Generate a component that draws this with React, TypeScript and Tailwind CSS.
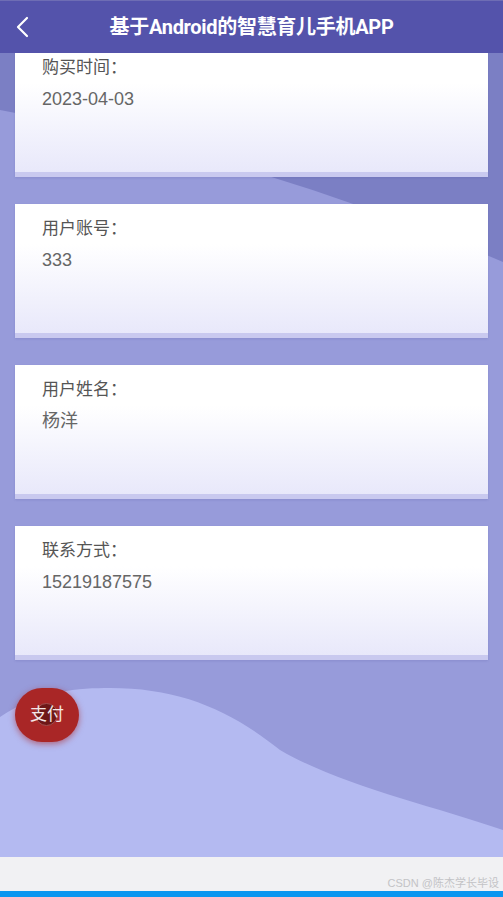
import React from 'react';

const rows = [
  { label: '购买时间：', value: '2023-04-03' },
  { label: '用户账号：', value: '333' },
  { label: '用户姓名：', value: '杨洋' },
  { label: '联系方式：', value: '15219187575' },
];

const font = { fontFamily: '"Liberation Sans", "Noto Sans CJK SC", sans-serif' };

function InfoCard({ label, value }: { label: string; value: string }) {
  return (
    <div className="h-[134px] flex flex-col bg-gradient-to-b from-white from-30% to-[#e7e7fa] shadow-[0_1px_2px_rgba(60,60,140,0.15)]">
      <div className="flex-1 pl-[27px] pt-[15px]">
        <div className="text-[17px] leading-[20px] text-[#555]">{label}</div>
        <div className="mt-[10px] text-[18px] leading-[22px] text-[#666]">{value}</div>
      </div>
      <div className="h-[5px] bg-[#c9c9ef]" />
    </div>
  );
}

export default function App() {
  return (
    <div className="w-[503px] h-[897px] flex flex-col overflow-hidden" style={font}>
      {/* Top bar */}
      <header className="h-[53px] shrink-0 relative flex items-center justify-center bg-[#5453ab] border-t border-[#6e6db4] z-10">
        <button aria-label="返回" className="absolute left-[14px] top-[14px] h-[24px] w-[16px] flex items-center justify-center">
          <svg width="14" height="22" viewBox="0 0 14 22" fill="none">
            <polyline points="12,2 3,11 12,20" stroke="white" strokeWidth="2.2" strokeLinecap="round" strokeLinejoin="round" />
          </svg>
        </button>
        <h1
          className="text-[20px] font-bold text-white tracking-[-0.3px]"
          style={{ fontFamily: 'Roboto, "Noto Sans CJK SC", sans-serif' }}
        >
          基于Android的智慧育儿手机APP
        </h1>
      </header>

      {/* Content */}
      <main className="relative flex-1 overflow-hidden bg-[#979bda]">
        <svg className="absolute inset-0 pointer-events-none" width="503" height="804" viewBox="0 0 503 804">
          <path d="M0,0 H503 V209 Q260,105 0,57 Z" fill="#7b7fc4" />
          <path
            d="M0,664 C40,637 80,635 110,635 C180,635 230,657 280,697 C340,732 430,752 503,777 L503,804 L0,804 Z"
            fill="#b4baf1"
          />
        </svg>

        <div className="relative -mt-[10px] px-[15px] flex flex-col gap-[27px]">
          {rows.map((r) => (
            <InfoCard key={r.label} label={r.label} value={r.value} />
          ))}
        </div>

        <div className="relative mt-[28px] px-[15px]">
          <button className="relative w-[64px] h-[54px] rounded-full bg-[#a92626] shadow-[0_2px_6px_rgba(170,30,30,0.55)] flex items-center justify-center">
            <span className="absolute left-[20px] top-[15px] w-[23px] h-[23px] rounded-full bg-[#6e1717] border border-[#a05050]" />
            <span className="relative text-[17px] text-[#f4e6e6]">支付</span>
          </button>
        </div>
      </main>

      {/* Bottom */}
      <footer className="h-[34px] shrink-0 bg-[#f1f1f3] flex items-end justify-end pr-[4px] pb-[1px]">
        <span className="text-[11px] leading-[14px] text-[#c3c3c6]">CSDN @陈杰学长毕设</span>
      </footer>
      <div className="h-[6px] shrink-0 bg-[#0a96f0]" />
    </div>
  );
}
